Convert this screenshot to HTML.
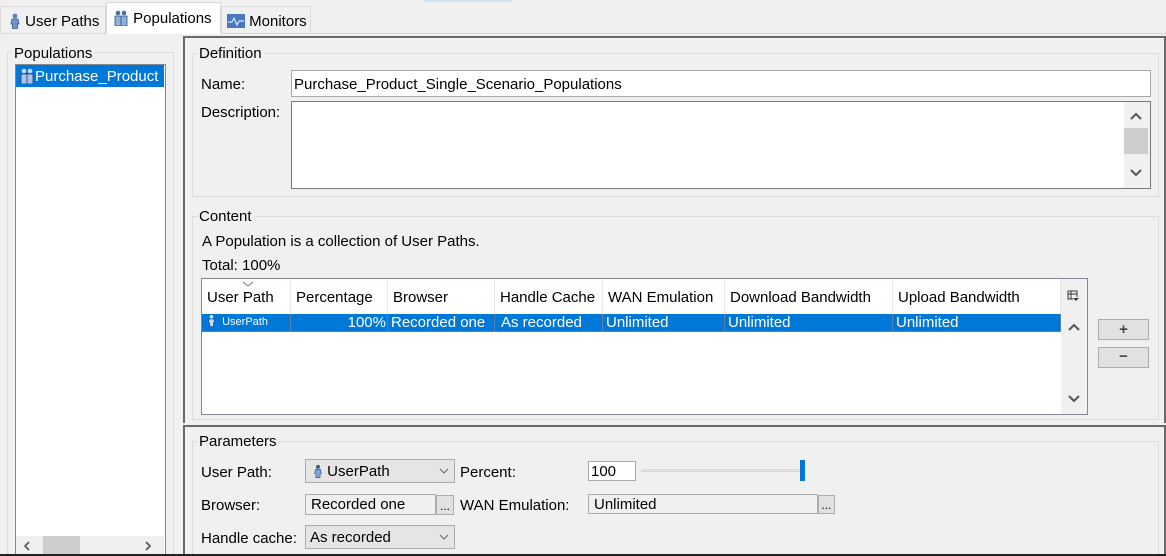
<!DOCTYPE html>
<html><head><meta charset="utf-8"><style>
*{box-sizing:border-box;margin:0;padding:0}
html{width:1166px;height:556px;overflow:hidden}
body{width:1166px;height:556px;background:#f0f0f0;font-family:"Liberation Sans",sans-serif;font-size:15px;color:#000;position:relative;overflow:hidden}
.a{position:absolute;white-space:nowrap}
.grp{position:absolute;border:1px solid #dcdcdc}
.lbl{position:absolute;background:#f0f0f0;padding:0 2px;line-height:16px;margin-top:1px}
.box{position:absolute;background:#fff;border:1px solid #a9a9a9}
.sel{background:#0078d7;color:#fff}
.th{position:absolute;top:0;height:35px;line-height:38px;padding-left:5px;border-right:1px solid #e6e6e6}
.td{position:absolute;top:0;height:17px;line-height:18px;padding-left:3px;border-right:1px solid #5d7fa6}
.btn{position:absolute;background:#e1e1e1;border:1px solid #adadad;text-align:center}
.t{line-height:18px;margin-top:2px}
</style></head><body>
<!-- tabs -->
<div class="a" style="left:424px;top:0;width:88px;height:2px;background:#cfe3f5"></div>
<div class="a" style="left:0;top:33px;width:1166px;height:1px;background:#d9d9d9"></div>
<div class="a" style="left:0;top:6px;width:106px;height:28px;border:1px solid #d9d9d9;border-bottom:none;line-height:29px;padding-left:8px">
<svg width="12" height="16" style="vertical-align:-3px" viewBox="0 0 12 16"><circle cx="6" cy="3" r="2.4" fill="#5a82b8"/><path d="M3 6h6l1 5H8.5v5h-5v-5H2z" fill="#6f96cc" stroke="#2d4f80" stroke-width=".7"/></svg> User Paths</div>
<div class="a" style="left:106px;top:2px;width:115px;height:32px;background:#fff;border:1px solid #d9d9d9;border-bottom:none;line-height:32px;padding-left:6px">
<svg width="16" height="16" style="vertical-align:-3px" viewBox="0 0 16 16"><circle cx="5" cy="3" r="2.3" fill="#4a6e9e"/><circle cx="11" cy="3" r="2.3" fill="#4a6e9e"/><path d="M2 6h6v10H2zM8 6h6v10H8z" fill="#8fb0da" stroke="#2d4f80" stroke-width=".8"/></svg> Populations</div>
<div class="a" style="left:221px;top:6px;width:90px;height:28px;border:1px solid #d9d9d9;border-bottom:none;line-height:29px;padding-left:5px">
<svg width="18" height="14" style="vertical-align:-2px" viewBox="0 0 18 14"><rect x="0" y="0" width="18" height="14" fill="#4a78c0"/><path d="M1 8h4l2-4 3 7 2-4h5" stroke="#d8e6ff" fill="none" stroke-width="1.2"/></svg> Monitors</div>

<!-- left panel -->
<div class="grp" style="left:7px;top:52px;width:167px;height:510px"></div>
<div class="lbl" style="left:12px;top:45px">Populations</div>
<div class="box" style="left:15px;top:64px;width:151px;height:500px;border-color:#828790"></div>
<div class="a sel" style="left:16px;top:65px;width:148px;height:22px;line-height:23px;padding-left:3px;overflow:hidden">
<svg width="16" height="16" style="vertical-align:-3px" viewBox="0 0 16 16"><circle cx="5" cy="3" r="2.3" fill="#c8d8f0"/><circle cx="11" cy="3" r="2.3" fill="#c8d8f0"/><path d="M2 6h6v10H2zM8 6h6v10H8z" fill="#a9c4e8" stroke="#1d3f70" stroke-width=".8"/></svg>Purchase_Product</div>
<div class="a" style="left:16px;top:536px;width:148px;height:20px;background:#f0f0f0"></div>
<div class="a" style="left:43px;top:536px;width:37px;height:20px;background:#cdcdcd"></div>
<svg class="a" style="left:22px;top:541px" width="10" height="10" viewBox="0 0 10 10"><path d="M7 1L3 5l4 4" stroke="#555" stroke-width="1.6" fill="none"/></svg>
<svg class="a" style="left:143px;top:541px" width="10" height="10" viewBox="0 0 10 10"><path d="M3 1l4 4-4 4" stroke="#555" stroke-width="1.6" fill="none"/></svg>

<!-- right upper panel -->
<div class="a" style="left:183px;top:36px;width:983px;height:387px;border-left:2px solid #696969;border-top:2px solid #696969;border-right:2px solid #696969"></div>
<div class="grp" style="left:192px;top:53px;width:967px;height:144px"></div>
<div class="lbl" style="left:197px;top:45px">Definition</div>
<div class="a t" style="left:201px;top:74px">Name:</div>
<div class="box" style="left:291px;top:70px;width:860px;height:27px;line-height:27px;padding-left:2px">Purchase_Product_Single_Scenario_Populations</div>
<div class="a t" style="left:201px;top:102px">Description:</div>
<div class="box" style="left:291px;top:101px;width:860px;height:88px;border-color:#7a7a7a"></div>
<div class="a" style="left:1124px;top:102px;width:26px;height:86px;background:#f0f0f0"></div>
<div class="a" style="left:1124px;top:128px;width:24px;height:26px;background:#cdcdcd"></div>
<svg class="a" style="left:1129px;top:111px" width="14" height="10" viewBox="0 0 14 10"><path d="M2 8l5-5 5 5" stroke="#555" stroke-width="2" fill="none"/></svg>
<svg class="a" style="left:1129px;top:168px" width="14" height="10" viewBox="0 0 14 10"><path d="M2 2l5 5 5-5" stroke="#555" stroke-width="2" fill="none"/></svg>

<div class="grp" style="left:192px;top:216px;width:967px;height:204px"></div>
<div class="lbl" style="left:197px;top:208px">Content</div>
<div class="a t" style="left:202px;top:231px">A Population is a collection of User Paths.</div>
<div class="a t" style="left:202px;top:255px">Total: 100%</div>
<div class="box" style="left:201px;top:278px;width:887px;height:137px;border-color:#828790">
  <div class="th" style="left:0;width:89px">User Path</div>
  <svg class="a" style="left:40px;top:2px" width="12" height="6" viewBox="0 0 12 6"><path d="M1 1l5 4 5-4" stroke="#777" fill="none"/></svg>
  <div class="th" style="left:89px;width:97px">Percentage</div>
  <div class="th" style="left:186px;width:107px">Browser</div>
  <div class="th" style="left:293px;width:108px">Handle Cache</div>
  <div class="th" style="left:401px;width:122px">WAN Emulation</div>
  <div class="th" style="left:523px;width:168px">Download Bandwidth</div>
  <div class="th" style="left:691px;width:168px">Upload Bandwidth</div>
  <div class="a sel" style="left:0;top:35px;width:859px;height:18px;border-bottom:1px solid #5d7fa6">
    <div class="td" style="left:0;width:89px;font-size:11px;padding-left:5px;line-height:17px"><svg width="9" height="13" style="vertical-align:-2px" viewBox="0 0 12 16"><circle cx="6" cy="3" r="2.4" fill="#dde8f8"/><path d="M3 6h6l1 5H8.5v5h-5v-5H2z" fill="#c8d8f0" stroke="#1d3f70" stroke-width=".7"/></svg>&nbsp; UserPath</div>
    <div class="td" style="left:89px;width:97px;text-align:right;padding-right:1px">100%</div>
    <div class="td" style="left:186px;width:107px">Recorded one</div>
    <div class="td" style="left:293px;width:108px;padding-left:6px">As recorded</div>
    <div class="td" style="left:401px;width:122px">Unlimited</div>
    <div class="td" style="left:523px;width:168px">Unlimited</div>
    <div class="td" style="left:691px;width:168px">Unlimited</div>
  </div>
  <div class="a" style="left:859px;top:0;width:26px;height:135px;background:#f0f0f0"></div>
  <svg class="a" style="left:865px;top:11px" width="12" height="12" viewBox="0 0 12 12"><path d="M1 1h9v6M1 1v8h5M1 4h9M4 1v8" stroke="#333" fill="none"/><path d="M6 8h6l-3 3z" fill="#333"/></svg>
  <svg class="a" style="left:865px;top:43px" width="14" height="10" viewBox="0 0 14 10"><path d="M2 8l5-5 5 5" stroke="#555" stroke-width="2" fill="none"/></svg>
  <svg class="a" style="left:865px;top:115px" width="14" height="10" viewBox="0 0 14 10"><path d="M2 2l5 5 5-5" stroke="#555" stroke-width="2" fill="none"/></svg>
</div>
<div class="btn" style="left:1098px;top:319px;width:51px;height:21px;line-height:19px;color:#445;font-weight:bold">+</div>
<div class="btn" style="left:1098px;top:347px;width:51px;height:21px;line-height:18px;color:#445;font-weight:bold">&minus;</div>

<!-- lower panel -->
<div class="a" style="left:183px;top:425px;width:983px;height:131px;border-left:2px solid #696969;border-top:2px solid #696969;border-right:2px solid #696969"></div>
<div class="grp" style="left:192px;top:441px;width:967px;height:130px"></div>
<div class="lbl" style="left:197px;top:433px">Parameters</div>
<div class="a t" style="left:201px;top:462px">User Path:</div>
<div class="a" style="left:305px;top:459px;width:150px;height:24px;background:#e5e5e5;border:1px solid #adadad;line-height:23px;padding-left:7px"><svg width="10" height="14" style="vertical-align:-2px" viewBox="0 0 12 16"><circle cx="6" cy="3" r="2.4" fill="#3d5f90"/><path d="M3 6h6l1 5H8.5v5h-5v-5H2z" fill="#7fa6dc" stroke="#2d4f80" stroke-width=".7"/></svg> UserPath<svg class="a" style="right:5px;top:8px" width="10" height="6" viewBox="0 0 10 6"><path d="M1 1l4 4 4-4" stroke="#666" fill="none"/></svg></div>
<div class="a t" style="left:460px;top:462px">Percent:</div>
<div class="box" style="left:588px;top:461px;width:48px;height:20px;line-height:20px;padding-left:2px">100</div>
<div class="a" style="left:641px;top:469px;width:160px;height:3px;background:#e7e7e7;border:1px solid #d6d6d6"></div>
<div class="a" style="left:800px;top:460px;width:5px;height:21px;background:#0078d7"></div>
<div class="a t" style="left:201px;top:495px">Browser:</div>
<div class="a" style="left:305px;top:494px;width:131px;height:21px;background:#f0f0f0;border:1px solid #adadad;line-height:20px;padding-left:5px">Recorded one</div>
<div class="btn" style="left:436px;top:495px;width:18px;height:20px;line-height:20px;font-size:12px">...</div>
<div class="a t" style="left:460px;top:495px">WAN Emulation:</div>
<div class="a" style="left:588px;top:494px;width:230px;height:20px;background:#f0f0f0;border:1px solid #adadad;line-height:19px;padding-left:5px">Unlimited</div>
<div class="btn" style="left:818px;top:495px;width:17px;height:19px;line-height:19px;font-size:12px">...</div>
<div class="a t" style="left:201px;top:528px">Handle cache:</div>
<div class="a" style="left:305px;top:525px;width:150px;height:24px;background:#e5e5e5;border:1px solid #adadad;line-height:23px;padding-left:4px">As recorded<svg class="a" style="right:5px;top:8px" width="10" height="6" viewBox="0 0 10 6"><path d="M1 1l4 4 4-4" stroke="#666" fill="none"/></svg></div>
<div class="a" style="left:0;top:554px;width:1166px;height:2px;background:#222"></div>
</body></html>
